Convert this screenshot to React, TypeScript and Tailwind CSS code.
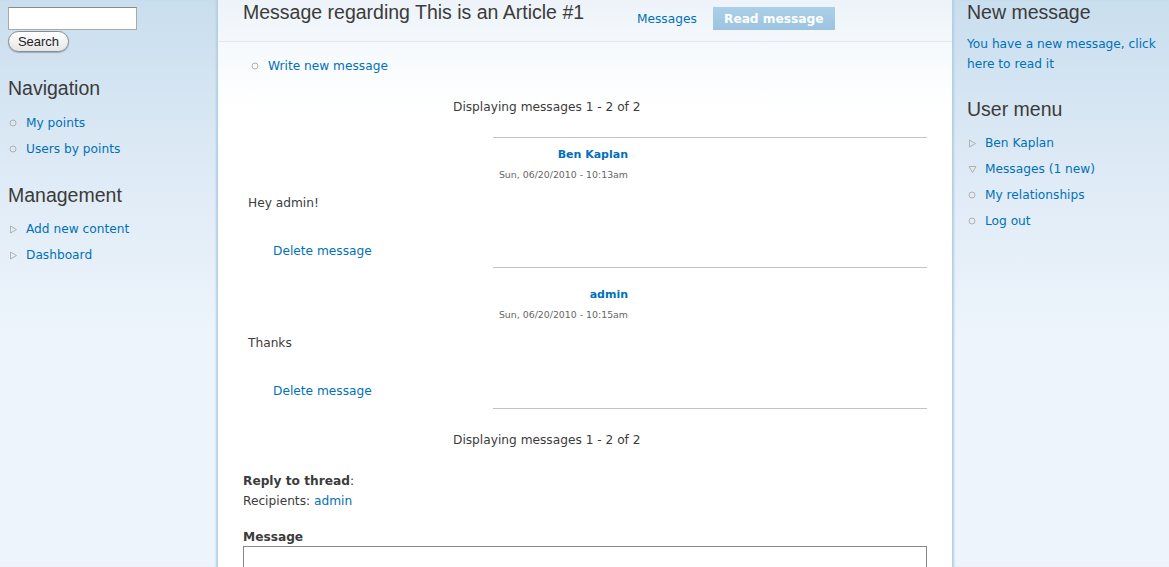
import React from "react";

const LINK = "text-[#0071b8]";

function Circle() {
  return (
    <svg width="8" height="8" viewBox="0 0 8 8" className="shrink-0">
      <circle cx="4" cy="4" r="3" fill="none" stroke="#b0b0b0" strokeWidth="1" />
    </svg>
  );
}
function TriRight() {
  return (
    <svg width="9" height="9" viewBox="0 0 9 9" className="shrink-0">
      <path d="M1.5 1 L7.5 4.5 L1.5 8 Z" fill="none" stroke="#b0b0b0" strokeWidth="1" />
    </svg>
  );
}
function TriDown() {
  return (
    <svg width="9" height="9" viewBox="0 0 9 9" className="shrink-0">
      <path d="M1 1.5 L8 1.5 L4.5 7.5 Z" fill="none" stroke="#b0b0b0" strokeWidth="1" />
    </svg>
  );
}

function Item({ icon, children }: { icon: React.ReactNode; children: React.ReactNode }) {
  return (
    <li className="flex items-center h-[26px] pt-[2px]">
      <span className="w-[18px] flex justify-start pl-[1px]">{icon}</span>
      <a className={LINK}>{children}</a>
    </li>
  );
}

const heading = "font-['Liberation_Sans',Arial,sans-serif] text-[19.5px] leading-[24px] text-[#3b3b3b]";
const line = "h-[18px] pt-[1px] leading-[18px]";

export default function App() {
  return (
    <div className="flex w-[1169px] h-[567px] overflow-hidden font-['DejaVu_Sans',Verdana,sans-serif] text-[12.2px] text-[#3b3b3b]">
      {/* Left sidebar */}
      <aside className="w-[218px] shrink-0 bg-[linear-gradient(to_bottom,#c9deee_0px,#dce9f5_150px,#edf4fb_330px)] shadow-[inset_-3px_0_2px_-1px_#b3cfe5] pl-[8px] pt-[7px]">
        <input className="block w-[129px] h-[23px] bg-white border border-[#a9a9a9] border-t-[#8a8a8a]" />
        <button className="mt-[1px] h-[21px] w-[61px] rounded-full border border-[#8c8c8c] bg-[linear-gradient(to_bottom,#ffffff,#e6e6e6)] text-[13px] leading-[18px] font-['Liberation_Sans',Arial,sans-serif] text-[#222] shadow-[0_1px_1px_rgba(0,0,0,0.25)]">
          Search
        </button>
        <h2 className={`${heading} mt-[24px]`}>Navigation</h2>
        <ul className="mt-[9px]">
          <Item icon={<Circle />}>My points</Item>
          <Item icon={<Circle />}>Users by points</Item>
        </ul>
        <h2 className={`${heading} mt-[22px]`}>Management</h2>
        <ul className="mt-[8px]">
          <Item icon={<TriRight />}>Add new content</Item>
          <Item icon={<TriRight />}>Dashboard</Item>
        </ul>
      </aside>

      {/* Main */}
      <main className="w-[734px] shrink-0 bg-[linear-gradient(to_bottom,#f2f7fb_0px,#f5f9fc_40px,#ffffff_110px)]">
        <div className="h-[42px] border-b border-[#e2e9f0] bg-[linear-gradient(to_bottom,#edf3f9,#f4f8fb)] pl-[25px] flex items-start">
          <h1 className={`${heading} w-[382px] shrink-0 whitespace-nowrap`}>Message regarding This is an Article #1</h1>
          <div className="flex gap-[4px] mt-[7px]">
            <a className={`${LINK} h-[23px] px-[12px] flex items-center pt-[1px]`}>Messages</a>
            <a className="h-[23px] w-[122px] flex items-center justify-center pt-[1px] bg-[linear-gradient(to_bottom,#aacfe8,#9cc4e0)] text-white font-bold">
              Read message
            </a>
          </div>
        </div>

        <div className="pl-[25px] pr-[25px] leading-[18px]">
          <ul className="mt-[14px] pl-[8px]">
            <li className={`flex items-center ${line}`}>
              <span className="w-[17px] flex"><Circle /></span>
              <a className={LINK}>Write new message</a>
            </li>
          </ul>
          <div className={`mt-[23px] pl-[210px] ${line}`}>Displaying messages 1 - 2 of 2</div>

          {/* message 1 */}
          <div className="ml-[250px] w-[434px] h-px bg-[#c4c4c4] mt-[22px]" />
          <div className="ml-[250px] w-[135px] text-right mt-[10px] h-[14px] leading-[14px] text-[11px] font-bold text-[#0071b8]">Ben Kaplan</div>
          <div className="ml-[250px] w-[135px] text-right mt-[6px] h-[13px] pt-[1px] leading-[12px] text-[9.4px] text-[#666] whitespace-nowrap flex justify-end">Sun, 06/20/2010 - 10:13am</div>
          <p className={`mt-[12px] pl-[5px] ${line}`}>Hey admin!</p>
          <a className={`${LINK} block mt-[30px] pl-[30px] ${line}`}>Delete message</a>

          {/* message 2 */}
          <div className="ml-[250px] w-[434px] h-px bg-[#c4c4c4] mt-[8px]" />
          <div className="ml-[250px] w-[135px] text-right mt-[20px] h-[14px] leading-[14px] text-[11px] font-bold text-[#0071b8]">admin</div>
          <div className="ml-[250px] w-[135px] text-right mt-[6px] h-[13px] pt-[1px] leading-[12px] text-[9.4px] text-[#666] whitespace-nowrap flex justify-end">Sun, 06/20/2010 - 10:15am</div>
          <p className={`mt-[12px] pl-[5px] ${line}`}>Thanks</p>
          <a className={`${LINK} block mt-[30px] pl-[30px] ${line}`}>Delete message</a>
          <div className="ml-[250px] w-[434px] h-px bg-[#c4c4c4] mt-[9px]" />

          <div className={`mt-[21px] pl-[210px] ${line}`}>Displaying messages 1 - 2 of 2</div>

          <div className={`mt-[23px] ${line}`}><span className="font-bold">Reply to thread</span>:</div>
          <div className={`mt-[2px] ${line}`}>Recipients: <a className={LINK}>admin</a></div>
          <div className={`mt-[18px] font-bold ${line}`}>Message</div>
          <div className="mt-[1px] w-[684px] h-[120px] border border-[#888] bg-white" />
        </div>
      </main>

      {/* Right sidebar */}
      <aside className="flex-1 bg-[linear-gradient(to_bottom,#c9deee_0px,#dce9f5_150px,#edf4fb_330px)] shadow-[inset_3px_0_2px_-1px_#b3cfe5] pl-[15px] pr-[8px]">
        <h2 className={heading}>New message</h2>
        <p className={`${LINK} mt-[9px] pt-[1px] leading-[20px]`}>You have a new message, click here to read it</p>
        <h2 className={`${heading} mt-[23px]`}>User menu</h2>
        <ul className="mt-[8px]">
          <Item icon={<TriRight />}>Ben Kaplan</Item>
          <Item icon={<TriDown />}>Messages (1 new)</Item>
          <Item icon={<Circle />}>My relationships</Item>
          <Item icon={<Circle />}>Log out</Item>
        </ul>
      </aside>
    </div>
  );
}
